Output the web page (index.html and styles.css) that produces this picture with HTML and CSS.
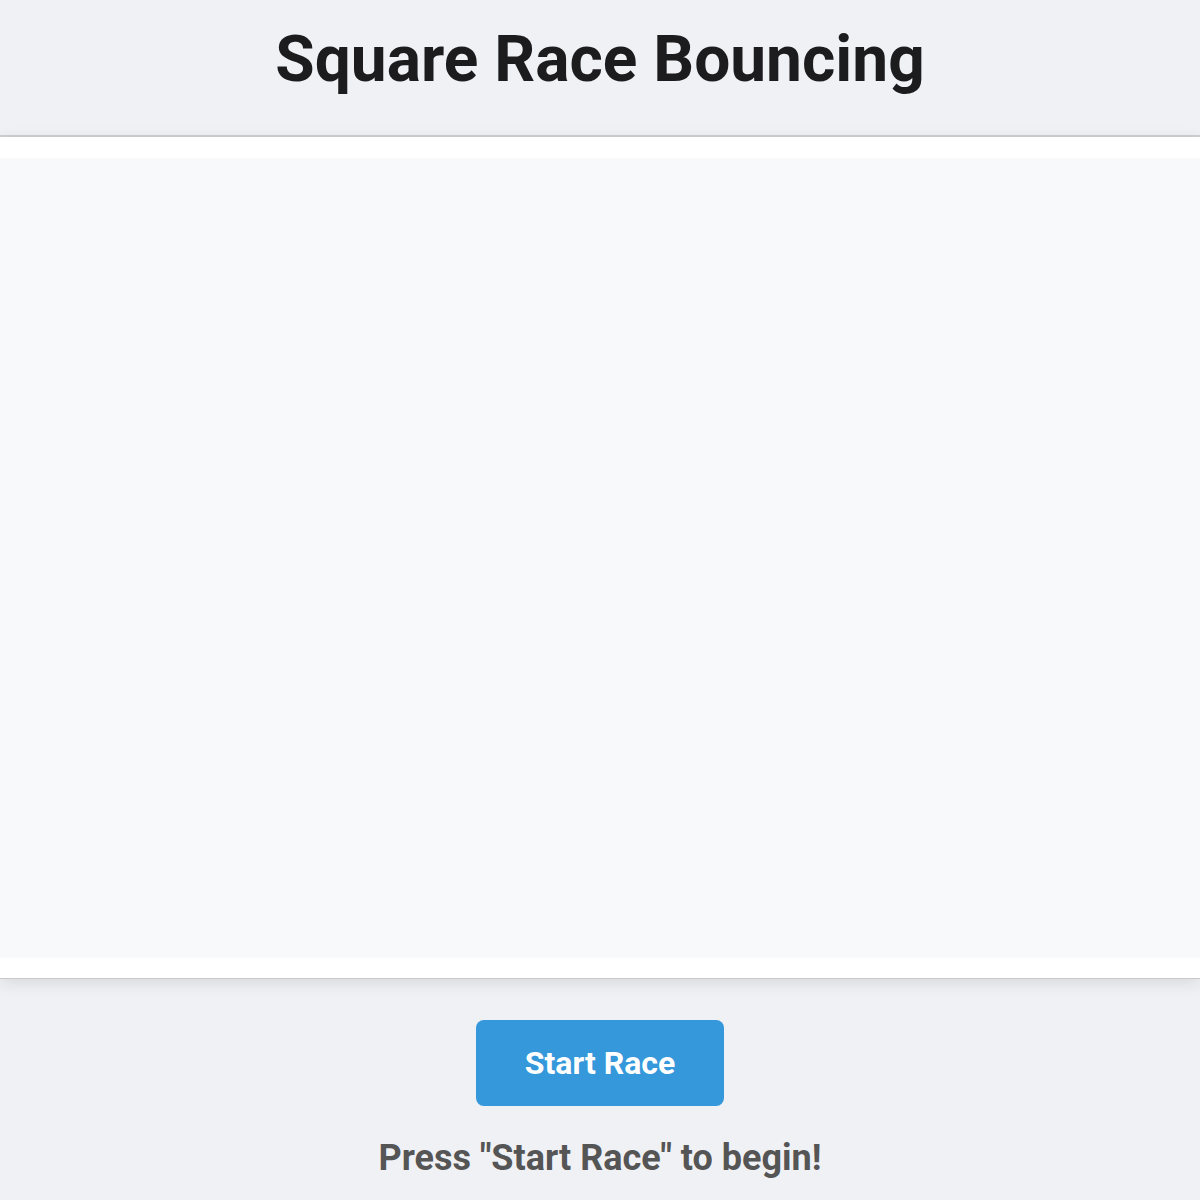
FILE: index.html
```html
<!DOCTYPE html>
<html lang="en">
<head>
    <meta charset="UTF-8">
    <meta name="viewport" content="width=device-width, initial-scale=1.0"/>
    <title>Square Race Bouncing</title>
    <link rel="stylesheet" href="styles.css">
</head>
<body>
<header class="header">
    <h1>Square Race Bouncing</h1>
</header>
<div class="stage">
    <canvas id="race" class="race" width="1160" height="800"></canvas>
</div>
<div class="controls">
    <button id="start" class="start-btn">Start Race</button>
    <p id="status" class="status">Press "Start Race" to begin!</p>
</div>
</body>
</html>
```

FILE: styles.css
```css
body {
    font-family: Roboto, "Liberation Sans", sans-serif;
    background: #f0f1f5;
    color: #1c1c1e;
    margin: 0;
    text-align: center;
}

.header {
    height: 135px;
    display: flex;
    align-items: center;
    justify-content: center;
    border-bottom: 2px solid #cfcfd2;
}

.header h1 {
    margin: 0 0 16px;
    font-size: 64px;
    font-weight: 700;
}

.stage {
    background: #fff;
    padding: 21px 0 20px;
    border-bottom: 1px solid #c8c8cb;
    box-shadow: 0 4px 16px rgba(0, 0, 0, 0.1);
}

.race {
    display: block;
    width: 100%;
    height: 800px;
    background: #f8f9fb;
}

.controls {
    padding-top: 41px;
}

.start-btn {
    width: 248px;
    height: 86px;
    border: none;
    border-radius: 8px;
    background: #3498db;
    color: #fff;
    font-family: inherit;
    font-size: 32px;
    font-weight: 700;
    cursor: pointer;
}

.status {
    margin: 31px 0 0;
    font-size: 36px;
    font-weight: 700;
    color: #555;
}
```
